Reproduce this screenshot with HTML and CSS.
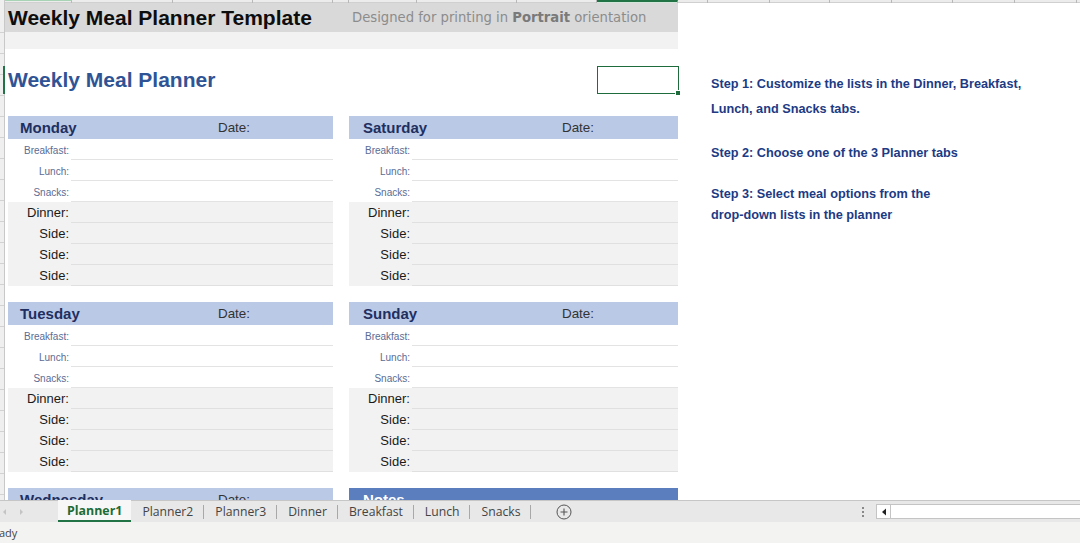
FILE: index.html
```html
<!DOCTYPE html>
<html>
<head>
<meta charset="utf-8">
<title>Weekly Meal Planner</title>
<link rel="stylesheet" href="styles.css">
</head>
<body>
<div class="app">
  <div class="sheet">
    <div class="gutter"><div class="gutter-sel"></div></div>
    <div class="main">
      <div class="colhdr">
        <div class="ch ch-a" style="width:67px"></div>
        <div class="ch" style="width:101px"></div>
        <div class="ch" style="width:80px"></div>
        <div class="ch" style="width:80px"></div>
        <div class="ch" style="width:16px"></div>
        <div class="ch" style="width:68px"></div>
        <div class="ch" style="width:100px"></div>
        <div class="ch" style="width:80px"></div>
        <div class="ch ch-sel" style="width:81px"></div>
        <div class="ch" style="width:30px"></div>
        <div class="ch" style="width:62px"></div>
        <div class="ch" style="width:60px"></div>
        <div class="ch" style="width:62px"></div>
        <div class="ch" style="width:61px"></div>
        <div class="ch" style="width:62px"></div>
        <div class="ch" style="width:62px"></div>
      </div>
      <div class="content">
        <div class="left">
          <div class="titlebar">
            <span class="title">Weekly Meal Planner Template</span>
            <span class="subtitle">Designed for printing in <b>Portrait</b> orientation</span>
          </div>
          <div class="subbar"></div>
          <div class="heading">
            <h1 class="planner-title">Weekly Meal Planner</h1>
            <div class="selcell"></div>
          </div>
          <div class="days">
            <div class="day">
              <div class="day-head"><span class="day-name">Monday</span><span class="day-date">Date:</span></div>
              <div class="row light"><span class="lbl">Breakfast:</span><span class="val"></span></div>
              <div class="row light"><span class="lbl">Lunch:</span><span class="val"></span></div>
              <div class="row light"><span class="lbl">Snacks:</span><span class="val"></span></div>
              <div class="row dark"><span class="lbl">Dinner:</span><span class="val"></span></div>
              <div class="row dark"><span class="lbl">Side:</span><span class="val"></span></div>
              <div class="row dark"><span class="lbl">Side:</span><span class="val"></span></div>
              <div class="row dark"><span class="lbl">Side:</span><span class="val"></span></div>
            </div>
            <div class="day day-r">
              <div class="day-head"><span class="day-name">Saturday</span><span class="day-date">Date:</span></div>
              <div class="row light"><span class="lbl">Breakfast:</span><span class="val"></span></div>
              <div class="row light"><span class="lbl">Lunch:</span><span class="val"></span></div>
              <div class="row light"><span class="lbl">Snacks:</span><span class="val"></span></div>
              <div class="row dark"><span class="lbl">Dinner:</span><span class="val"></span></div>
              <div class="row dark"><span class="lbl">Side:</span><span class="val"></span></div>
              <div class="row dark"><span class="lbl">Side:</span><span class="val"></span></div>
              <div class="row dark"><span class="lbl">Side:</span><span class="val"></span></div>
            </div>
            <div class="day">
              <div class="day-head"><span class="day-name">Tuesday</span><span class="day-date">Date:</span></div>
              <div class="row light"><span class="lbl">Breakfast:</span><span class="val"></span></div>
              <div class="row light"><span class="lbl">Lunch:</span><span class="val"></span></div>
              <div class="row light"><span class="lbl">Snacks:</span><span class="val"></span></div>
              <div class="row dark"><span class="lbl">Dinner:</span><span class="val"></span></div>
              <div class="row dark"><span class="lbl">Side:</span><span class="val"></span></div>
              <div class="row dark"><span class="lbl">Side:</span><span class="val"></span></div>
              <div class="row dark"><span class="lbl">Side:</span><span class="val"></span></div>
            </div>
            <div class="day day-r">
              <div class="day-head"><span class="day-name">Sunday</span><span class="day-date">Date:</span></div>
              <div class="row light"><span class="lbl">Breakfast:</span><span class="val"></span></div>
              <div class="row light"><span class="lbl">Lunch:</span><span class="val"></span></div>
              <div class="row light"><span class="lbl">Snacks:</span><span class="val"></span></div>
              <div class="row dark"><span class="lbl">Dinner:</span><span class="val"></span></div>
              <div class="row dark"><span class="lbl">Side:</span><span class="val"></span></div>
              <div class="row dark"><span class="lbl">Side:</span><span class="val"></span></div>
              <div class="row dark"><span class="lbl">Side:</span><span class="val"></span></div>
            </div>
            <div class="day">
              <div class="day-head"><span class="day-name">Wednesday</span><span class="day-date">Date:</span></div>
            </div>
            <div class="day day-r">
              <div class="day-head notes-head"><span class="day-name">Notes</span></div>
            </div>
          </div>
        </div>
        <div class="right">
          <p class="step step1">Step 1: Customize the lists in the Dinner, Breakfast,<br>Lunch, and Snacks tabs.</p>
          <p class="step step2">Step 2: Choose one of the 3 Planner tabs</p>
          <p class="step step3">Step 3: Select meal options from the<br>drop-down lists in the planner</p>
        </div>
      </div>
    </div>
  </div>
  <div class="tabbar">
    <div class="nav">
      <span class="nav-arrow nav-left"></span>
      <span class="nav-arrow nav-right"></span>
    </div>
    <div class="tab active">Planner1</div>
    <div class="tab">Planner2</div>
    <div class="tab">Planner3</div>
    <div class="tab">Dinner</div>
    <div class="tab">Breakfast</div>
    <div class="tab">Lunch</div>
    <div class="tab">Snacks</div>
    <div class="add">
      <svg width="16" height="16" viewBox="0 0 16 16"><circle cx="8" cy="8" r="7" fill="none" stroke="#555" stroke-width="1"/><path d="M8 4.5v7M4.5 8h7" stroke="#555" stroke-width="1.1"/></svg>
    </div>
    <div class="spacer"></div>
    <div class="dots"><span></span><span></span><span></span></div>
    <div class="hscroll">
      <div class="hs-btn"><svg width="6" height="8" viewBox="0 0 6 8"><path d="M5 0.5 L1 4 L5 7.5Z" fill="#222"/></svg></div>
      <div class="hs-track"></div>
    </div>
  </div>
  <div class="status">ady</div>
</div>
</body>
</html>
```
FILE: styles.css
```css
* { box-sizing: border-box; }
html, body { margin: 0; padding: 0; background: #fff; }
body { font-family: "Liberation Sans", Arial, sans-serif; }

.app { width: 1080px; height: 543px; display: flex; flex-direction: column; overflow: hidden; }

.sheet { height: 500px; display: flex; overflow: hidden; }

.gutter {
  width: 5px; flex: none;
  background-color: #efefef;
  background-image: repeating-linear-gradient(to bottom, transparent 0, transparent 20px, #d2d2d2 20px, #d2d2d2 21px);
  background-position: 0 12px;
  border-right: 1px solid #c8c8c8;
  padding-top: 66px;
  display: flex; flex-direction: column; align-items: flex-end;
}
.gutter-sel { width: 2px; height: 28px; background: #217346; margin-right: -1px; }

.main { flex: 1; display: flex; flex-direction: column; min-width: 0; }

.colhdr { height: 3px; display: flex; background: #ececec; border-bottom: 1px solid #d0d0d0; flex: none; }
.ch { height: 3px; border-right: 1px solid #b8b8b8; flex: none; }
.ch-a { border-top: 1px solid #a8d3b5; }
.ch-sel { background: #d3e6da; border-top: 2px solid #217346; }

.content { flex: 1; display: flex; min-height: 0; }

.left { width: 673px; flex: none; }

.titlebar {
  height: 29px; background: #d9d9d9;
  display: flex; align-items: center; padding-left: 3px;
}
.title { font-weight: bold; font-size: 21px; color: #0d0d0d; width: 344px; }
.subtitle { font-family: "DejaVu Sans", Verdana, sans-serif; font-size: 13.2px; color: #8c8c8c; }
.subtitle b { color: #7a7a7a; }

.subbar { height: 17px; background: #f2f2f2; }

.heading {
  height: 67px; display: flex; justify-content: space-between; align-items: flex-start;
  padding-top: 17px; padding-left: 3px;
}
.planner-title { margin: 0; font-size: 21px; line-height: 28px; font-weight: bold; color: #2f5496; }
.selcell { width: 82px; height: 28px; border: 1.5px solid #1e6b3c; position: relative; margin-right: -1px; }
.selcell::after {
  content: ""; position: absolute; right: -3px; bottom: -3px;
  width: 4px; height: 4px; background: #1e6b3c; border: 1px solid #fff;
}

.days {
  display: grid; grid-template-columns: 325px 329px; column-gap: 16px; row-gap: 16px;
  padding-left: 3px;
}
.day { height: 170px; display: flex; flex-direction: column; }

.day-head {
  height: 23px; background: #b9c9e6; display: flex; align-items: center; padding-left: 12px; flex: none;
}
.day-r .day-head { padding-left: 14px; }
.day-name { font-weight: bold; font-size: 15px; color: #1f2f5f; width: 198px; }
.day-r .day-name { width: 199px; }
.day-date { font-size: 13.4px; color: #333; }

.notes-head { background: #5b7ebf; }
.notes-head .day-name { color: #fff; }

.row { height: 21px; display: flex; align-items: stretch; flex: none; }
.lbl {
  width: 63px; flex: none; text-align: right; padding-right: 2px;
  display: flex; align-items: center; justify-content: flex-end;
}
.val { flex: 1; border-bottom: 1px solid #e3e3e3; }
.row.light .lbl { font-size: 10px; color: #5b6b93; padding-top: 1px; }
.row.dark { background: #f2f2f2; }
.row.dark .lbl { font-size: 13px; color: #1a1a1a; }
.row.dark .val { border-bottom-color: #e0e0e0; }

.right { flex: 1; background: #fff; padding-left: 33px; padding-top: 69px; }
.step { margin: 0; font-weight: bold; font-size: 12.7px; color: #203a84; line-height: 21px; white-space: nowrap; }
.step1 { line-height: 25px; }
.step2 { margin-top: 21px; }
.step3 { margin-top: 20px; }

.tabbar {
  height: 22px; flex: none; background: #e8e8e8; border-top: 1px solid #c6c6c6;
  display: flex; align-items: stretch;
  font-family: "Open Sans", "Noto Sans", sans-serif; font-size: 12.2px; color: #444;
}
.nav { width: 58px; flex: none; display: flex; align-items: center; padding-left: 3px; gap: 14px; }
.nav-arrow { width: 0; height: 0; border-top: 3px solid transparent; border-bottom: 3px solid transparent; }
.nav-left { border-right: 3px solid #c4c4c4; }
.nav-right { border-left: 3px solid #c4c4c4; }

.tab {
  display: flex; align-items: center; padding: 0 11px 1px;
  position: relative;
}
.tab::after {
  content: ""; position: absolute; right: 0; top: 4px; height: 14px; width: 1px; background: #a8a8a8;
}
.tab.active {
  background: #f7f7f7; color: #1e6b35; font-weight: bold; padding: 0 9px 0 9px;
  border-bottom: 2px solid #217346; margin-top: -1px; font-size: 12.4px;
}
.tab.active::after { display: none; }

.add { display: flex; align-items: center; margin-left: 25px; }

.spacer { flex: 1; }
.dots { display: flex; flex-direction: column; justify-content: center; gap: 2px; margin-right: 12px; }
.dots span { width: 2px; height: 2px; background: #888; display: block; }

.hscroll {
  width: 204px; flex: none; margin: 3px 0 3px 0;
  display: flex; border: 1px solid #c4c4c4; border-right: none; background: #fff;
}
.hs-btn { width: 14px; border-right: 1px solid #c4c4c4; display: flex; align-items: center; justify-content: center; }
.hs-track { flex: 1; }

.status {
  flex: 1; background: #f3f3f2;
  font-family: "Open Sans", "Noto Sans", sans-serif; font-size: 11px; color: #444;
  display: flex; align-items: center; padding-left: 0; margin-left: -1px;
}
```
